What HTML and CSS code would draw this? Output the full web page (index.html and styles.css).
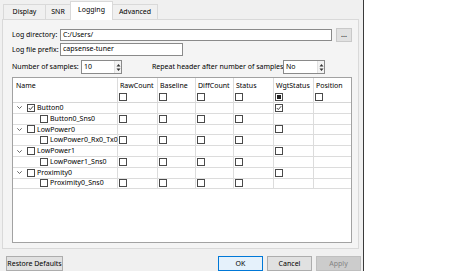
FILE: index.html
```html
<!DOCTYPE html>
<html>
<head>
<meta charset="utf-8">
<link rel="stylesheet" href="styles.css">
</head>
<body>
<div class="dialog">
  <div class="tabs">
    <div class="tab t-display">Display</div>
    <div class="tab t-snr">SNR</div>
    <div class="tab t-logging active">Logging</div>
    <div class="tab t-advanced">Advanced</div>
  </div>
  <div class="pane">
    <div class="row r1">
      <span class="lbl l-dir">Log directory:</span>
      <div class="field f-dir">C:/Users/</div>
      <div class="btn-dots">...</div>
    </div>
    <div class="row r2">
      <span class="lbl l-dir">Log file prefix:</span>
      <div class="field f-prefix">capsense-tuner</div>
    </div>
    <div class="row r3">
      <span class="lbl l-num">Number of samples:</span>
      <div class="spin s-num"><span class="spin-val">10</span><span class="spin-arrows"><svg width="5" height="9" viewBox="0 0 5 9"><path d="M2.5 1 L4.5 3.5 L0.5 3.5 Z M0.5 5.5 L4.5 5.5 L2.5 8 Z" fill="#333"/></svg></span></div>
      <span class="lbl l-repeat">Repeat header after number of samples:</span>
      <div class="spin s-no"><span class="spin-val">No</span><span class="spin-arrows"><svg width="5" height="9" viewBox="0 0 5 9"><path d="M2.5 1 L4.5 3.5 L0.5 3.5 Z M0.5 5.5 L4.5 5.5 L2.5 8 Z" fill="#333"/></svg></span></div>
    </div>
    <div class="table">
      <div class="grid">
        <div class="hc hc-name"><span class="hl">Name</span></div>
        <div class="hc"><span class="hl">RawCount</span><span class="cb"></span></div>
        <div class="hc"><span class="hl">Baseline</span><span class="cb"></span></div>
        <div class="hc"><span class="hl">DiffCount</span><span class="cb"></span></div>
        <div class="hc"><span class="hl">Status</span><span class="cb"></span></div>
        <div class="hc"><span class="hl">WgtStatus</span><span class="cb partial"></span></div>
        <div class="hc last"><span class="hl">Position</span><span class="cb"></span></div>

        <div class="c name parent"><svg class="chev" width="5" height="3" viewBox="0 0 5 3"><path d="M0.3 0.3 L2.5 2.5 L4.7 0.3" fill="none" stroke="#555" stroke-width="0.9"/></svg><span class="cb checked"><svg width="6" height="6" viewBox="0 0 6 6"><path d="M0.8 3 L2.3 4.6 L5.2 1.2" fill="none" stroke="#333" stroke-width="0.9"/></svg></span><span class="nm">Button0</span></div>
        <div class="c"></div><div class="c"></div><div class="c"></div><div class="c"></div>
        <div class="c"><span class="cb checked"><svg width="6" height="6" viewBox="0 0 6 6"><path d="M0.8 3 L2.3 4.6 L5.2 1.2" fill="none" stroke="#333" stroke-width="0.9"/></svg></span></div>
        <div class="c last"></div>

        <div class="c name child"><span class="cb"></span><span class="nm">Button0_Sns0</span></div>
        <div class="c"><span class="cb"></span></div><div class="c"><span class="cb"></span></div><div class="c"><span class="cb"></span></div><div class="c"><span class="cb"></span></div>
        <div class="c"></div><div class="c last"></div>

        <div class="c name parent"><svg class="chev" width="5" height="3" viewBox="0 0 5 3"><path d="M0.3 0.3 L2.5 2.5 L4.7 0.3" fill="none" stroke="#555" stroke-width="0.9"/></svg><span class="cb"></span><span class="nm">LowPower0</span></div>
        <div class="c"></div><div class="c"></div><div class="c"></div><div class="c"></div>
        <div class="c"><span class="cb"></span></div><div class="c last"></div>

        <div class="c name child"><span class="cb"></span><span class="nm">LowPower0_Rx0_Tx0</span></div>
        <div class="c"><span class="cb"></span></div><div class="c"><span class="cb"></span></div><div class="c"><span class="cb"></span></div><div class="c"><span class="cb"></span></div>
        <div class="c"></div><div class="c last"></div>

        <div class="c name parent"><svg class="chev" width="5" height="3" viewBox="0 0 5 3"><path d="M0.3 0.3 L2.5 2.5 L4.7 0.3" fill="none" stroke="#555" stroke-width="0.9"/></svg><span class="cb"></span><span class="nm">LowPower1</span></div>
        <div class="c"></div><div class="c"></div><div class="c"></div><div class="c"></div>
        <div class="c"><span class="cb"></span></div><div class="c last"></div>

        <div class="c name child"><span class="cb"></span><span class="nm">LowPower1_Sns0</span></div>
        <div class="c"><span class="cb"></span></div><div class="c"><span class="cb"></span></div><div class="c"><span class="cb"></span></div><div class="c"><span class="cb"></span></div>
        <div class="c"></div><div class="c last"></div>

        <div class="c name parent"><svg class="chev" width="5" height="3" viewBox="0 0 5 3"><path d="M0.3 0.3 L2.5 2.5 L4.7 0.3" fill="none" stroke="#555" stroke-width="0.9"/></svg><span class="cb"></span><span class="nm">Proximity0</span></div>
        <div class="c"></div><div class="c"></div><div class="c"></div><div class="c"></div>
        <div class="c"><span class="cb"></span></div><div class="c last"></div>

        <div class="c name child"><span class="cb"></span><span class="nm">Proximity0_Sns0</span></div>
        <div class="c"><span class="cb"></span></div><div class="c"><span class="cb"></span></div><div class="c"><span class="cb"></span></div><div class="c"><span class="cb"></span></div>
        <div class="c"></div><div class="c last"></div>
      </div>
    </div>
  </div>
  <div class="footer">
    <div class="btn b-restore">Restore Defaults</div>
    <div class="spacer"></div>
    <div class="btn b-ok">OK</div>
    <div class="btn b-cancel">Cancel</div>
    <div class="btn b-apply">Apply</div>
  </div>
</div>
</body>
</html>
```

FILE: styles.css
```css
* { box-sizing: border-box; }
html, body { margin: 0; padding: 0; }
body {
  width: 474px;
  height: 271px;
  background: #ffffff;
  font-family: "Noto Sans", "DejaVu Sans", sans-serif;
  font-size: 7px;
  color: #000;
  overflow: hidden;
}
.dialog {
  width: 364px;
  height: 271px;
  background: #f0f0f0;
  border-right: 1px solid #3a3a3a;
  padding: 1px 4px 0 2px;
  display: flex;
  flex-direction: column;
}
/* tabs */
.tabs {
  display: flex;
  align-items: flex-end;
  height: 18px;
  padding-left: 1px;
  position: relative;
  z-index: 1;
}
.tab {
  height: 15px;
  border: 1px solid #d9d9d9;
  border-bottom: none;
  background: #f0f0f0;
  margin-left: -1px;
  display: flex;
  align-items: center;
  justify-content: center;
  line-height: 10px;
}
.t-display { width: 43px; margin-left: 0; }
.t-snr { width: 26px; }
.t-logging { width: 43px; }
.t-advanced { width: 46px; }
.tab.active {
  height: 19px;
  margin-bottom: -1px;
  background: #ffffff;
  padding-bottom: 2px;
}
/* pane */
.pane {
  height: 230px;
  border: 1px solid #d9d9d9;
  background: #f4f4f4;
  padding: 8px 6px 5px 9px;
  display: flex;
  flex-direction: column;
}
.row { display: flex; align-items: center; }
.r1 { height: 14px; }
.r2 { height: 13px; margin-top: 1px; }
.r3 { height: 14px; margin-top: 4px; }
.lbl { white-space: nowrap; line-height: 10px; }
.l-dir { width: 48px; }
.l-num { width: 69px; }
.l-repeat { width: 131px; margin-left: 30px; }
.field {
  background: #fff;
  border: 1px solid #8a8a8a;
  height: 12px;
  padding-left: 2px;
  line-height: 10px;
  white-space: nowrap;
}
.f-dir { width: 272px; }
.f-prefix { width: 123px; height: 13px; }
.btn-dots {
  margin-left: 4px;
  width: 16px;
  height: 14px;
  background: #e1e1e1;
  border: 1px solid #c9c9c9;
  display: flex;
  align-items: center;
  justify-content: center;
  font-weight: bold;
  line-height: 10px;
  color: #333;
}
.spin {
  background: #fff;
  border: 1px solid #8a8a8a;
  height: 14px;
  display: flex;
  align-items: center;
  padding-left: 2px;
}
.s-num { width: 41px; }
.s-no { width: 42px; }
.spin-val { flex: 1; line-height: 10px; }
.spin-arrows {
  width: 7px;
  height: 12px;
  display: flex;
  align-items: center;
  justify-content: center;
  background: #f3f3f3;
  border-left: 1px solid #e2e2e2;
}
/* table */
.table {
  flex: 1;
  margin-top: 3px;
  border: 1px solid #a2a2a2;
  background: #fff;
}
.grid {
  display: grid;
  grid-template-columns: 105px 40px 38px 38px 40px 40px 1fr;
  grid-template-rows: 25px;
  grid-auto-rows: 10.8px;
}
.hc {
  border-right: 1px solid #dcdcdc;
  border-bottom: 1px solid #d6d6d6;
  padding: 3px 0 0 2px;
  display: flex;
  flex-direction: column;
  align-items: flex-start;
}
.hc-name { padding-left: 3px; }
.hl { line-height: 9px; white-space: nowrap; }
.hc .cb { margin-top: 3px; margin-left: -1px; }
.c {
  border-right: 1px solid #dcdcdc;
  border-bottom: 1px solid #dcdcdc;
  display: flex;
  align-items: center;
  padding-left: 1px;
  white-space: nowrap;
}
.last { border-right: none; }
.name.parent { padding-left: 4px; }
.name.child { padding-left: 27px; }
.chev { margin-right: 5px; }
.nm { margin-left: 2px; line-height: 10px; }
.cb {
  width: 8px;
  height: 8px;
  border: 1px solid #4a4a4a;
  background: #fff;
  display: flex;
  align-items: center;
  justify-content: center;
  flex: none;
}
.cb.partial::after {
  content: "";
  width: 4px;
  height: 4px;
  background: #222;
}
/* footer */
.footer {
  display: flex;
  padding: 7px 0 0 4px;
  margin-right: -2px;
}
.spacer { flex: 1; }
.btn {
  height: 15px;
  border: 1px solid #adadad;
  background: #e1e1e1;
  display: flex;
  align-items: center;
  justify-content: center;
  line-height: 10px;
  white-space: nowrap;
}
.b-restore { width: 57px; }
.b-ok { width: 45px; border-color: #0078d7; background: #e5f1fb; }
.b-cancel { width: 45px; margin-left: 4px; }
.b-apply { width: 45px; margin-left: 4px; background: #cccccc; border-color: #bfbfbf; color: #838383; }
```
